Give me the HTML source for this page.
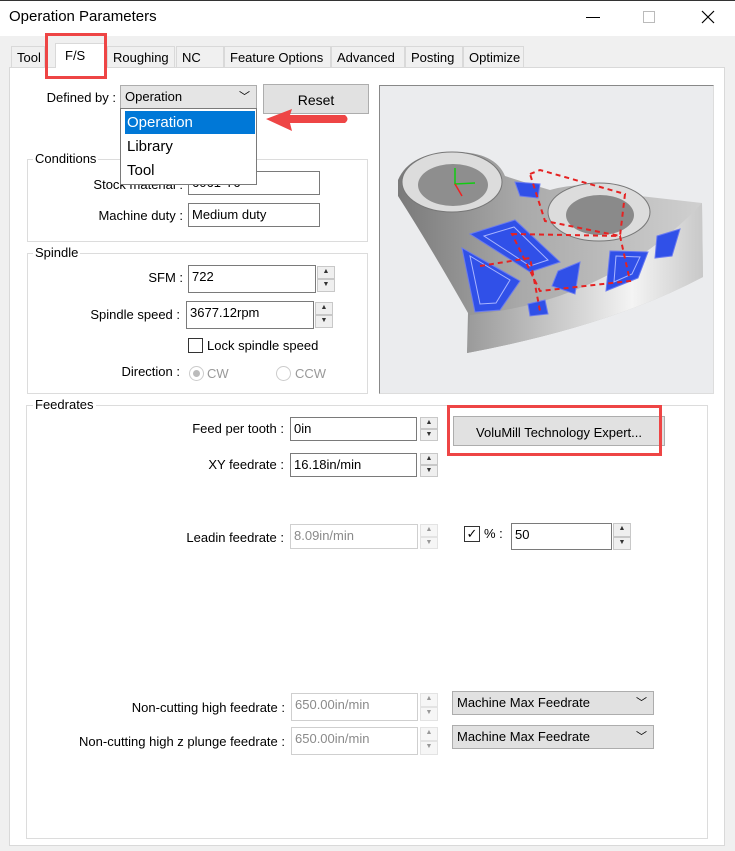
<!DOCTYPE html>
<html><head><meta charset="utf-8"><style>
*{box-sizing:border-box;margin:0;padding:0}
body{width:735px;height:851px;background:#f0f0f0;position:relative;overflow:hidden;font-family:"Liberation Sans",Arial,sans-serif;font-size:13px;color:#000}
.a{position:absolute}
.f{position:absolute;background:#fff;border:1px solid #7a7a7a;padding:3px 0 0 3px;font-size:13px}
.dis{border-color:#cfcfcf;color:#8a8a8a}
.sp{position:absolute;width:18px}
.sp div{height:50%;border:1px solid #c8c8c8;background:#efefef;font-size:7px;text-align:center;color:#333;line-height:10px}
.g{position:absolute;border:1px solid #dcdcdc}
.gl{position:absolute;background:#fff;padding:0 2px;font-size:13px}
.lbl{position:absolute;text-align:right;font-size:13px}
.tab{position:absolute;top:46px;height:21px;border:1px solid #d9d9d9;border-bottom:none;background:#f0f0f0;padding:3px 0 0 5px;font-size:13px}
.btn{position:absolute;background:#e1e1e1;border:1px solid #adadad;text-align:center}
.cmb{position:absolute;background:#e1e1e1;border:1px solid #adadad;padding:3px 0 0 4px}
</style></head><body>
<div class="a" style="left:0;top:0;width:735px;height:36px;background:#fff;border-top:1px solid #333"></div>
<div class="a" style="left:9px;top:8px;font-size:15px">Operation Parameters</div>
<div class="a" style="left:586px;top:17px;width:14px;border-top:1px solid #000"></div>
<div class="a" style="left:643px;top:11px;width:12px;height:12px;border:1px solid #bbb"></div>
<svg class="a" style="left:701px;top:10px" width="14" height="14"><path d="M1 1L13 13M13 1L1 13" stroke="#000" stroke-width="1.2"/></svg>

<div class="a" style="left:9px;top:67px;width:716px;height:779px;background:#fff;border:1px solid #d9d9d9"></div>
<div class="tab" style="left:11px;width:34px">Tool</div>
<div class="tab" style="left:55px;top:43px;height:25px;width:51px;background:#fff;padding:4px 0 0 9px">F/S</div>
<div class="tab" style="left:107px;width:68px">Roughing</div>
<div class="tab" style="left:176px;width:48px">NC</div>
<div class="tab" style="left:224px;width:107px">Feature Options</div>
<div class="tab" style="left:331px;width:74px">Advanced</div>
<div class="tab" style="left:405px;width:58px">Posting</div>
<div class="tab" style="left:463px;width:61px">Optimize</div>
<div class="a" style="left:45px;top:33px;width:62px;height:46px;border:3px solid #ee4545"></div>

<div class="lbl" style="left:30px;top:90px;width:86px">Defined by :</div>
<div class="cmb" style="left:120px;top:85px;width:137px;height:24px;background:#e5e5e5">Operation<span style="position:absolute;right:6px;top:2px;font-size:11px">﹀</span></div>
<div class="btn" style="left:263px;top:84px;width:106px;height:30px;padding-top:7px;font-size:14px">Reset</div>

<div class="g" style="left:27px;top:159px;width:341px;height:83px"></div>
<div class="gl" style="left:33px;top:151px">Conditions</div>
<div class="lbl" style="left:60px;top:177px;width:123px">Stock material :</div>
<div class="f" style="left:188px;top:171px;width:132px;height:24px">6061-T6</div>
<div class="lbl" style="left:60px;top:208px;width:123px">Machine duty :</div>
<div class="f" style="left:188px;top:203px;width:132px;height:24px">Medium duty</div>

<div class="a" style="left:120px;top:108px;width:137px;height:77px;background:#fff;border:1px solid #7a7a7a"></div>
<div class="a" style="left:125px;top:111px;width:130px;height:23px;background:#0078d7;color:#fff;font-size:15px;padding:3px 0 0 2px">Operation</div>
<div class="a" style="left:127px;top:138px;font-size:15px">Library</div>
<div class="a" style="left:127px;top:162px;font-size:15px">Tool</div>
<svg class="a" style="left:260px;top:106px" width="95" height="30"><path d="M6 13 L32 3 L30 9 L85 9 Q90 13 85 17 L30 17 L32 25 Z" fill="#ee4545"/></svg>

<div class="g" style="left:27px;top:253px;width:341px;height:141px"></div>
<div class="gl" style="left:33px;top:245px">Spindle</div>
<div class="lbl" style="left:60px;top:270px;width:123px">SFM :</div>
<div class="f" style="left:188px;top:265px;width:128px;height:28px">722</div>
<div class="sp" style="left:317px;top:266px;height:26px"><div>▲</div><div>▼</div></div>
<div class="lbl" style="left:40px;top:307px;width:140px">Spindle speed :</div>
<div class="f" style="left:186px;top:301px;width:128px;height:28px">3677.12rpm</div>
<div class="sp" style="left:315px;top:302px;height:26px"><div>▲</div><div>▼</div></div>
<div class="a" style="left:188px;top:338px;width:15px;height:15px;border:1px solid #333;background:#fff"></div>
<div class="a" style="left:207px;top:338px;font-size:13px">Lock spindle speed</div>
<div class="lbl" style="left:60px;top:364px;width:120px">Direction :</div>
<div class="a" style="left:189px;top:366px;width:15px;height:15px;border:1px solid #ccc;border-radius:50%;background:#fff"><div style="margin:3px;width:7px;height:7px;border-radius:50%;background:#bbb"></div></div>
<div class="a" style="left:207px;top:366px;color:#999">CW</div>
<div class="a" style="left:276px;top:366px;width:15px;height:15px;border:1px solid #ccc;border-radius:50%;background:#fff"></div>
<div class="a" style="left:295px;top:366px;color:#999">CCW</div>

<div class="a" style="left:379px;top:85px;width:335px;height:309px;background:#ebecee;border:1px solid #888;border-right-color:#ddd;border-bottom-color:#ddd"></div>
<svg class="a" style="left:380px;top:86px" width="333" height="307" viewBox="0 0 333 307">
<defs>
<linearGradient id="m" x1="0" x2="1"><stop offset="0" stop-color="#7a7a7a"/><stop offset=".4" stop-color="#a9a9a9"/><stop offset="1" stop-color="#d0d0d0"/></linearGradient>
<linearGradient id="b" x1="0" x2="1"><stop offset="0" stop-color="#9a9a9a"/><stop offset=".5" stop-color="#d8d8d8"/><stop offset=".7" stop-color="#f4f4f4"/><stop offset="1" stop-color="#c8c8c8"/></linearGradient>
</defs>
<path d="M18 94 Q30 66 75 66 Q115 66 125 90 Q150 98 170 104 Q210 92 260 110 L322 117 L323 191 Q230 240 87 267 L88 227 Q50 160 18 110 Z" fill="url(#m)"/>
<path d="M90 229 Q230 215 322 117 L323 191 Q230 240 87 267 Z" fill="url(#b)"/>
<ellipse cx="72" cy="96" rx="50" ry="30" fill="#dcdcdc" stroke="#777"/><ellipse cx="73" cy="99" rx="35" ry="21" fill="#8e8e8e"/>
<ellipse cx="219" cy="126" rx="51" ry="29" fill="#dcdcdc" stroke="#777"/><ellipse cx="220" cy="129" rx="34" ry="20" fill="#8a8a8a"/>
<g fill="#3050e8" stroke="#6a7af0" stroke-width="1">
<path d="M90 148 L135 134 L180 176 L150 186 Z"/>
<path d="M82 162 L140 195 L120 224 L95 226 Z"/>
<path d="M178 185 L200 176 L195 208 L172 200 Z"/>
<path d="M230 165 L268 166 L258 192 L226 205 Z"/>
<path d="M277 150 L300 143 L292 170 L275 172 Z"/>
<path d="M135 96 L160 98 L158 112 L140 110 Z"/>
<path d="M148 218 L165 214 L168 228 L150 230 Z"/>
</g>
<g fill="none" stroke="#a8b4ff" stroke-width="1">
<path d="M104 150 L134 141 L168 174 L150 180 Z M90 170 L130 194 L116 217 L100 218 Z M236 170 L260 171 L252 188 L234 196 Z"/>
</g>
<g fill="none" stroke="#e52222" stroke-width="2" stroke-dasharray="5 4">
<path d="M150 88 L160 84 L245 108 L240 150 L165 135 Z M132 148 L240 150 L250 195 L160 205 Z M100 180 L150 172 L160 225"/>
</g>
<path d="M75 82 L75 98 L95 97" stroke="#1c1" stroke-width="1.5" fill="none"/><path d="M75 98 L82 110" stroke="#e22" stroke-width="1.5"/>
</svg>

<div class="g" style="left:26px;top:405px;width:682px;height:434px"></div>
<div class="gl" style="left:33px;top:397px">Feedrates</div>
<div class="lbl" style="left:120px;top:421px;width:164px">Feed per tooth :</div>
<div class="f" style="left:290px;top:417px;width:127px;height:24px">0in</div>
<div class="sp" style="left:420px;top:417px;height:24px"><div>▲</div><div>▼</div></div>
<div class="lbl" style="left:120px;top:457px;width:164px">XY feedrate :</div>
<div class="f" style="left:290px;top:453px;width:127px;height:24px">16.18in/min</div>
<div class="sp" style="left:420px;top:453px;height:24px"><div>▲</div><div>▼</div></div>
<div class="btn" style="left:453px;top:416px;width:212px;height:30px;padding-top:8px">VoluMill Technology Expert...</div>
<div class="a" style="left:447px;top:405px;width:215px;height:51px;border:3px solid #ee4545"></div>

<div class="lbl" style="left:120px;top:530px;width:164px">Leadin feedrate :</div>
<div class="f dis" style="left:290px;top:524px;width:128px;height:25px">8.09in/min</div>
<div class="sp" style="left:420px;top:524px;height:25px;opacity:.5"><div>▲</div><div>▼</div></div>
<div class="a" style="left:464px;top:526px;width:16px;height:16px;border:1px solid #333;background:#fff;font-size:13px;line-height:14px;text-align:center">✓</div>
<div class="a" style="left:484px;top:526px">% :</div>
<div class="f" style="left:511px;top:523px;width:101px;height:27px">50</div>
<div class="sp" style="left:613px;top:523px;height:27px"><div>▲</div><div>▼</div></div>

<div class="lbl" style="left:60px;top:700px;width:225px">Non-cutting high feedrate :</div>
<div class="f dis" style="left:291px;top:693px;width:127px;height:28px">650.00in/min</div>
<div class="sp" style="left:420px;top:693px;height:28px;opacity:.5"><div>▲</div><div>▼</div></div>
<div class="cmb" style="left:452px;top:691px;width:202px;height:24px">Machine Max Feedrate<span style="position:absolute;right:6px;top:2px;font-size:11px">﹀</span></div>
<div class="lbl" style="left:40px;top:734px;width:245px">Non-cutting high z plunge feedrate :</div>
<div class="f dis" style="left:291px;top:727px;width:127px;height:28px">650.00in/min</div>
<div class="sp" style="left:420px;top:727px;height:28px;opacity:.5"><div>▲</div><div>▼</div></div>
<div class="cmb" style="left:452px;top:725px;width:202px;height:24px">Machine Max Feedrate<span style="position:absolute;right:6px;top:2px;font-size:11px">﹀</span></div>
</body></html>
